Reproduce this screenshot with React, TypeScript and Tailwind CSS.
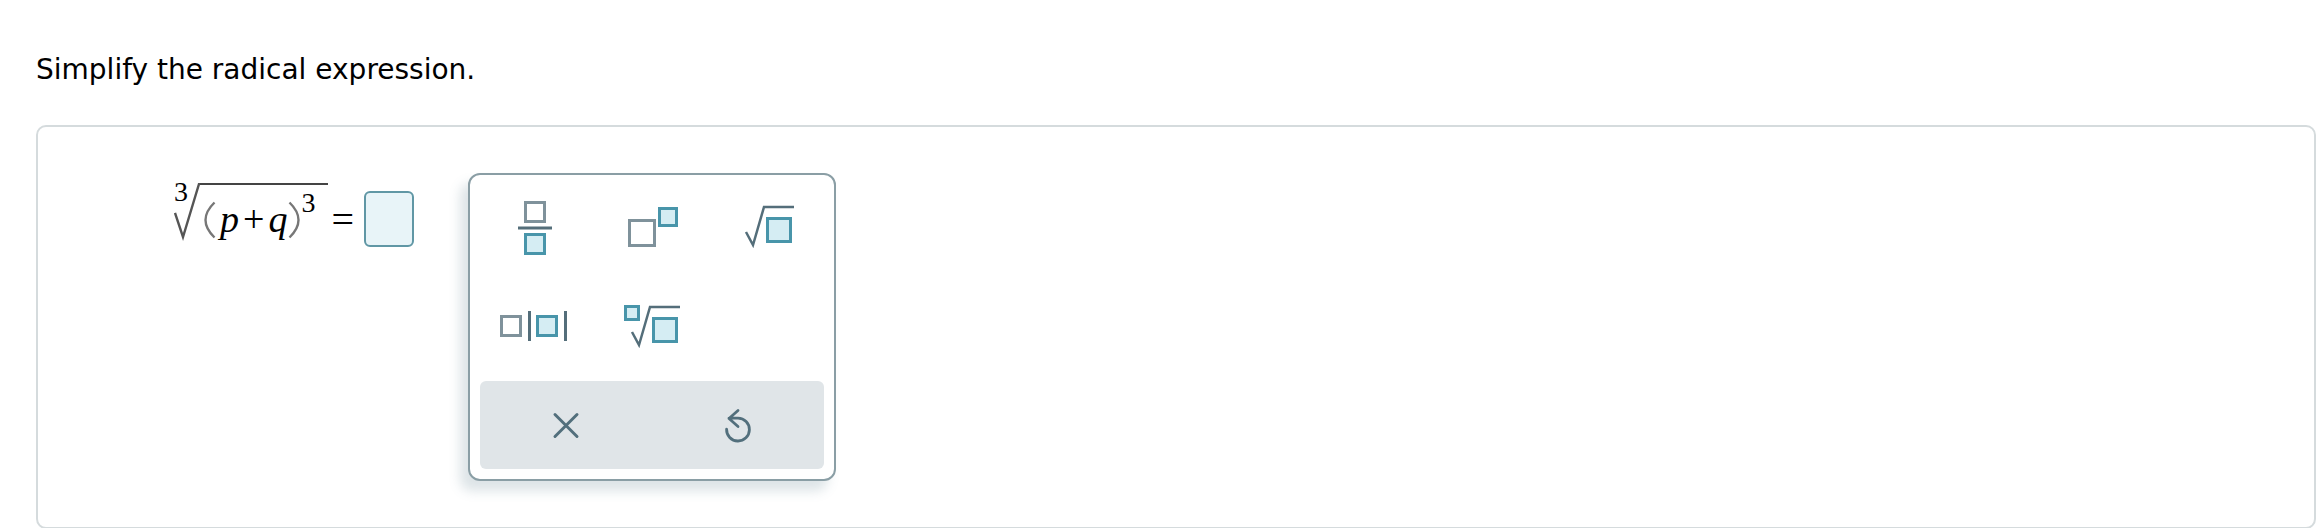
import { ReactNode, useState } from 'react';

const TEAL = '#4895aa';
const TEAL_FILL = '#d5edf3';
const GRAY = '#7f929b';
const SLATE = '#546e7a';

interface SquareProps {
    x: number;
    y: number;
    size: number;
    filled?: boolean;
}

function Square({ x, y, size, filled }: SquareProps) {
    return (
        <rect
            x={x}
            y={y}
            width={size}
            height={size}
            fill={filled ? TEAL_FILL : '#fff'}
            stroke={filled ? TEAL : GRAY}
            strokeWidth={3}
        />
    );
}

interface ToolProps {
    label: string;
    children: ReactNode;
}

function Tool({ label, children }: ToolProps) {
    return (
        <button type="button" aria-label={label} className="block h-24 cursor-pointer">
            <svg viewBox="0 2 112 96" className="h-full w-full" fill="none" stroke={SLATE} strokeWidth={3}>
                {children}
            </svg>
        </button>
    );
}

function Palette({ onClear }: { onClear: () => void }) {
    return (
        <div className="rounded-xl border-2 border-[#8a9ea5] bg-white p-[10px] shadow-[-8px_10px_12px_rgba(84,120,135,0.2)]">
            <div className="mb-1 grid grid-cols-[repeat(3,112px)] gap-x-1">
                <Tool label="Fraction">
                    <Square x={45.5} y={19.5} size={19} />
                    <path d="M38 45H72" />
                    <Square x={45.5} y={51.5} size={19} filled />
                </Tool>
                <Tool label="Exponent">
                    <Square x={33.5} y={37.5} size={25} />
                    <Square x={63.5} y={25.5} size={17} filled />
                </Tool>
                <Tool label="Square root">
                    <path d="M34 49L41 62L52 24H82" strokeWidth={2.5} />
                    <Square x={55.5} y={35.5} size={23} filled />
                </Tool>
                <Tool label="Absolute value">
                    <Square x={21.5} y={37.5} size={19} />
                    <path d="M49.5 32V62M85.5 32V62" />
                    <Square x={57.5} y={37.5} size={19} filled />
                </Tool>
                <Tool label="Nth root">
                    <Square x={29.5} y={27.5} size={13} filled />
                    <path d="M36 53L43 66L54 28H84" strokeWidth={2.5} />
                    <Square x={57.5} y={39.5} size={23} filled />
                </Tool>
            </div>

            {/* Clear / undo */}
            <div className="flex h-[88px] rounded-md bg-[#e0e5e8]">
                <button
                    type="button"
                    aria-label="Clear"
                    onClick={onClear}
                    className="flex flex-1 cursor-pointer items-center justify-center"
                >
                    <svg width="40" height="40" fill="none" stroke="#526f7c" strokeWidth={3} strokeLinecap="round">
                        <path d="M9 9.5L31 31.5M31 9.5L9 31.5" />
                    </svg>
                </button>
                <button
                    type="button"
                    aria-label="Undo"
                    onClick={onClear}
                    className="flex flex-1 cursor-pointer items-center justify-center"
                >
                    <svg
                        width="40"
                        height="40"
                        fill="none"
                        stroke="#526f7c"
                        strokeWidth={2.8}
                        strokeLinecap="round"
                        strokeLinejoin="round"
                    >
                        <path d="M20 5.5L11 13.5L20 21.5M11 13.2H20A11.4 11.4 0 1 1 8.6 24.2" />
                    </svg>
                </button>
            </div>
        </div>
    );
}

function Expression() {
    return (
        <div className="flex items-start font-['Liberation_Serif',serif] text-black">
            <div className="relative h-[58px] w-[26px]">
                <span className="absolute -top-[5px] left-0 text-[28px] leading-7">3</span>
                <svg width="26" height="58" fill="none" stroke="#555" strokeWidth={2.4}>
                    <path d="M1 30L9 54L25 1H26" />
                </svg>
            </div>
            <div className="flex h-[58px] items-start border-t-2 border-[#444] pr-[13px] pl-1">
                <svg width="12" height="38" className="mt-4" fill="none" stroke="#777" strokeWidth={2.4}>
                    <path d="M10.5 1.5Q-7.5 19 10.5 36.5" />
                </svg>
                <div className="ml-1 flex gap-1 pt-[22px] text-[38px] leading-6">
                    <i>p</i>
                    <span>+</span>
                    <i>q</i>
                </div>
                <svg width="14" height="38" className="mt-4" fill="none" stroke="#777" strokeWidth={2.4}>
                    <path d="M2.5 1.5Q20.5 19 2.5 36.5" />
                </svg>
                <span className="pt-1 text-[28px] leading-7">3</span>
            </div>
        </div>
    );
}

export default function App() {
    const [answer, setAnswer] = useState('');

    return (
        <main className="h-screen overflow-hidden bg-white pt-[54px] pr-2 pl-9">
            <h1 className="mb-[39px] font-['DejaVu_Sans',sans-serif] text-[28px] leading-8 text-black">
                Simplify the radical expression.
            </h1>
            <section className="flex items-start rounded-[10px] border-2 border-[#d5dbdd] pt-[46px] pb-[46px] pl-[136px]">
                <div className="mt-[10px]">
                    <Expression />
                </div>
                <span className="mt-[35px] ml-[3px] font-['Liberation_Serif',serif] text-[40px] leading-6 text-black">
                    =
                </span>
                <input
                    type="text"
                    aria-label="Answer"
                    value={answer}
                    onChange={(e) => setAnswer(e.target.value)}
                    className="mt-[18px] mr-[54px] ml-[10px] h-[56px] w-[50px] rounded-[6px] border-2 border-[#6097a5] bg-[#e8f4f8] text-center font-['Liberation_Serif',serif] text-[32px] outline-none"
                />
                <Palette onClear={() => setAnswer('')} />
            </section>
        </main>
    );
}
